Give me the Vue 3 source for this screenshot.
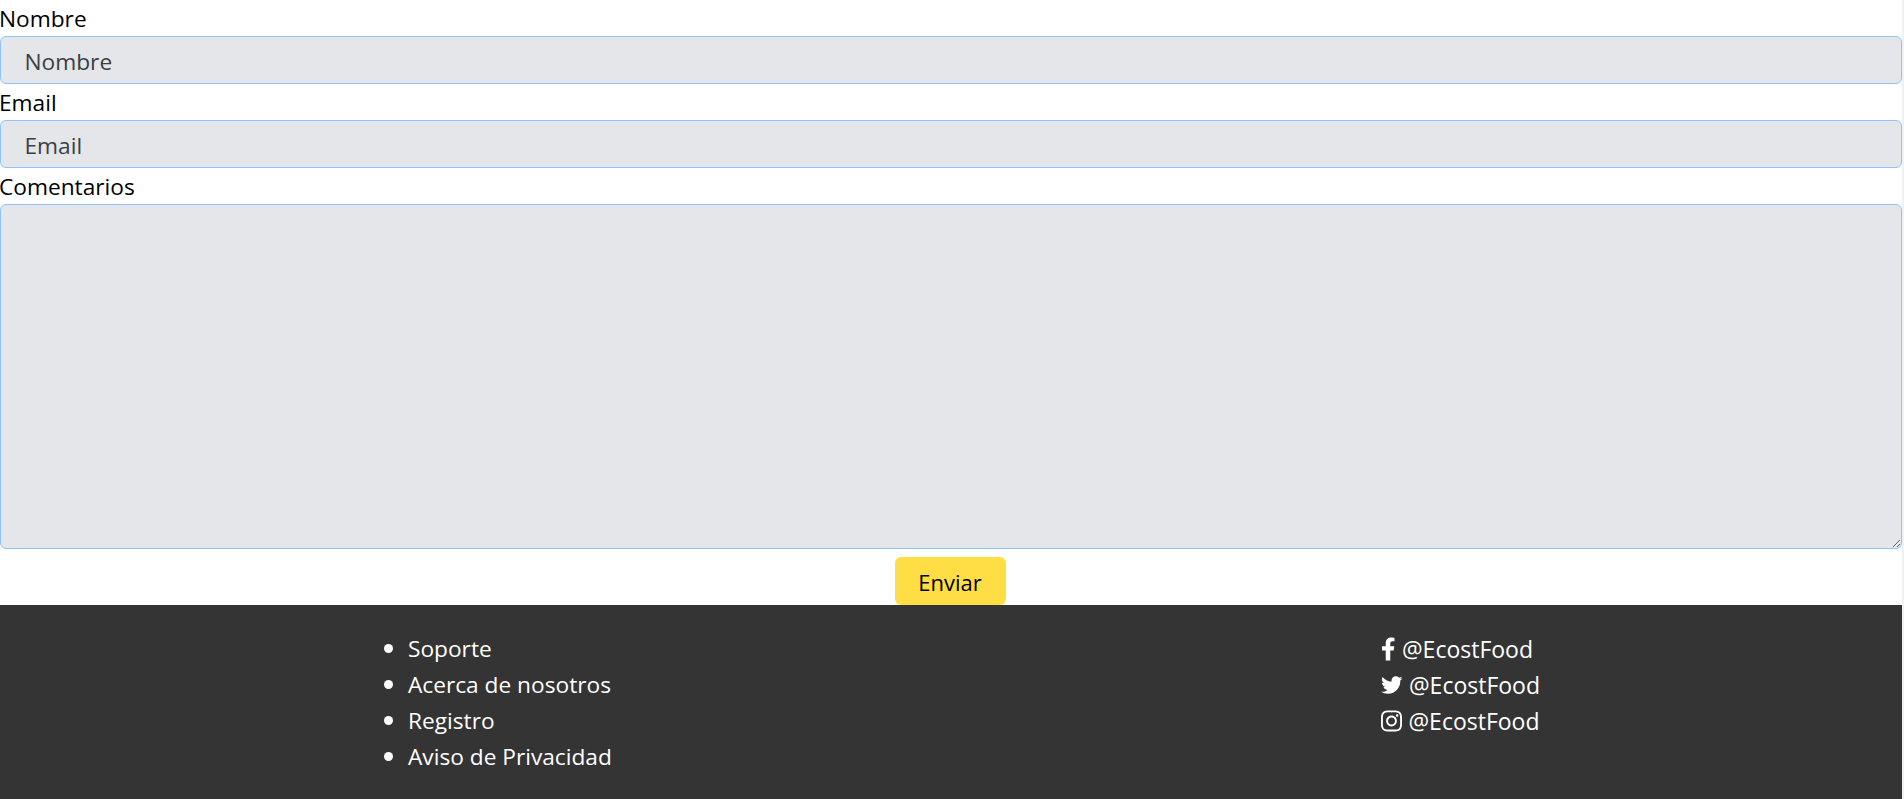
<template>
  <div class="page">
    <form class="contact-form" @submit.prevent>
      <label for="nombre">Nombre</label>
      <input id="nombre" class="field" type="text" placeholder="Nombre" />
      <label for="email">Email</label>
      <input id="email" class="field" type="text" placeholder="Email" />
      <label for="comentarios">Comentarios</label>
      <textarea id="comentarios" class="field comments"></textarea>
      <div class="actions">
        <button class="send-btn" type="submit">Enviar</button>
      </div>
    </form>

    <footer class="site-footer">
      <ul class="footer-links">
        <li v-for="link in links" :key="link">{{ link }}</li>
      </ul>
      <div class="social">
        <div v-for="item in social" :key="item.name" class="social-row">
          <svg class="social-icon" :viewBox="item.box" :style="{ width: item.width + 'px' }" aria-hidden="true">
            <path fill="currentColor" :d="item.path" />
          </svg>
          <span>@EcostFood</span>
        </div>
      </div>
    </footer>
  </div>
</template>

<script setup>
const links = ['Soporte', 'Acerca de nosotros', 'Registro', 'Aviso de Privacidad']

const social = [
  {
    name: 'facebook',
    box: '0 0 320 512',
    width: 14.5,
    path: 'M279.14 288l14.22-92.66h-88.91v-60.13c0-25.35 12.42-50.06 52.24-50.06h40.42V6.26S260.43 0 225.36 0c-73.22 0-121.08 44.38-121.08 124.72v70.62H22.89V288h81.39v224h100.17V288z'
  },
  {
    name: 'twitter',
    box: '0 0 512 512',
    width: 21.5,
    path: 'M459.37 151.716c.325 4.548.325 9.097.325 13.645 0 138.72-105.583 298.558-298.558 298.558-59.452 0-114.68-17.219-161.137-47.106 8.447.974 16.568 1.299 25.34 1.299 49.055 0 94.213-16.568 130.274-44.832-46.132-.975-84.792-31.188-98.112-72.772 6.498.974 12.995 1.624 19.818 1.624 9.421 0 18.843-1.3 27.614-3.573-48.081-9.747-84.143-51.98-84.143-102.985v-1.299c13.969 7.797 30.214 12.67 47.431 13.319-28.264-18.843-46.781-51.005-46.781-87.391 0-19.492 5.197-37.36 14.294-52.954 51.655 63.675 129.3 105.258 216.365 109.807-1.624-7.797-2.599-15.918-2.599-24.04 0-57.828 46.782-104.934 104.934-104.934 30.213 0 57.502 12.67 76.67 33.137 23.715-4.548 46.456-13.32 66.599-25.34-7.798 24.366-24.366 44.833-46.132 57.827 21.117-2.273 41.584-8.122 60.426-16.243-14.292 20.791-32.161 39.308-52.628 54.253z'
  },
  {
    name: 'instagram',
    box: '0 0 448 512',
    width: 21,
    path: 'M224.1 141c-63.6 0-114.9 51.3-114.9 114.9s51.3 114.9 114.9 114.9S339 319.5 339 255.9 287.7 141 224.1 141zm0 189.6c-41.1 0-74.7-33.5-74.7-74.7s33.5-74.7 74.7-74.7 74.7 33.5 74.7 74.7-33.6 74.7-74.7 74.7zm146.4-194.3c0 14.9-12 26.8-26.8 26.8-14.9 0-26.8-12-26.8-26.8s12-26.8 26.8-26.8 26.8 12 26.8 26.8zm76.1 27.2c-1.7-35.9-9.9-67.7-36.2-93.9-26.2-26.2-58-34.4-93.9-36.2-37-2.1-147.9-2.1-184.9 0-35.8 1.7-67.6 9.9-93.9 36.1s-34.4 58-36.2 93.9c-2.1 37-2.1 147.9 0 184.9 1.7 35.9 9.9 67.7 36.2 93.9s58 34.4 93.9 36.2c37 2.1 147.9 2.1 184.9 0 35.9-1.7 67.7-9.9 93.9-36.2 26.2-26.2 34.4-58 36.2-93.9 2.1-37 2.1-147.8 0-184.8zM398.8 388c-7.8 19.6-22.9 34.7-42.6 42.6-29.5 11.7-99.5 9-132.1 9s-102.7 2.6-132.1-9c-19.6-7.8-34.7-22.9-42.6-42.6-11.7-29.5-9-99.5-9-132.1s-2.6-102.7 9-132.1c7.8-19.6 22.9-34.7 42.6-42.6 29.5-11.7 99.5-9 132.1-9s102.7-2.6 132.1 9c19.6 7.8 34.7 22.9 42.6 42.6 11.7 29.5 9 99.5 9 132.1s2.7 102.7-9 132.1z'
  }
]
</script>

<style>
html, body {
  margin: 0;
  background: #fff;
}
</style>

<style scoped>
.page {
  width: 1904px;
  height: 799px;
  overflow: hidden;
  padding-right: 2px;
  box-sizing: border-box;
  font-family: 'Open Sans', 'Noto Sans', sans-serif;
  font-size: 22.7px;
  line-height: 36px;
  color: #000;
  background: #f1f1f1;
}

.contact-form {
  display: flex;
  flex-direction: column;
  height: 605px;
  box-sizing: border-box;
  background: #fff;
}

.contact-form label {
  height: 36px;
  line-height: 38px;
  margin-left: -1px;
}

.field {
  display: block;
  box-sizing: border-box;
  width: 100%;
  height: 48px;
  padding: 2px 23.5px 0;
  font: inherit;
  color: #3a3f45;
  background: #e5e6ea;
  border: 1.5px solid #8fc3fb;
  border-radius: 6px;
  outline: none;
}

.field::placeholder {
  color: #3a3f45;
  opacity: 1;
}

.comments {
  height: 345px;
  resize: vertical;
}

.actions {
  display: flex;
  justify-content: center;
  padding: 8px 2px 0 0;
}

.send-btn {
  width: 111px;
  height: 48px;
  padding: 1px 0 0;
  font: inherit;
  font-size: 22px;
  color: #000;
  background: #ffde45;
  border: 0;
  border-radius: 6px;
}

.site-footer {
  display: flex;
  height: 194px;
  padding: 26px 0 0 360px;
  box-sizing: border-box;
  color: #fff;
  background: #343434;
}

.footer-links {
  width: 1021px;
  margin: 0;
  padding: 0 0 0 48px;
  box-sizing: border-box;
  list-style: none;
}

.footer-links li {
  position: relative;
}

.footer-links li::before {
  content: '';
  position: absolute;
  left: -24px;
  top: 13px;
  width: 9px;
  height: 9px;
  border-radius: 50%;
  background: #fff;
}

.social {
  font-size: 23px;
}

.social-row {
  display: flex;
  align-items: center;
  gap: 6.5px;
  height: 36px;
}

.social-icon {
  height: 24px;
  flex: none;
}
</style>
